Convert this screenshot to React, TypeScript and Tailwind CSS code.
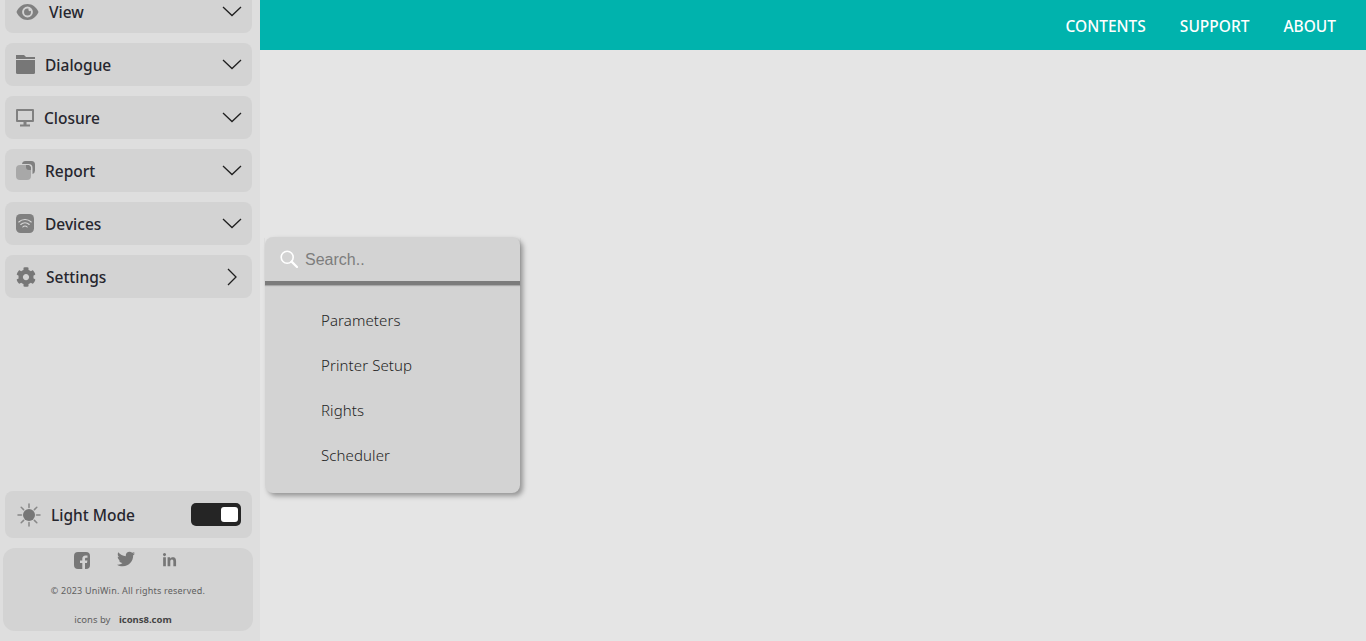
import { ReactNode } from 'react'
import { FaCog, FaTwitter, FaLinkedinIn } from 'react-icons/fa'

const uiFont = "font-['Noto_Sans','Open_Sans',sans-serif]"

function EyeIcon() {
  return (
    <svg width="23" height="18" viewBox="0 0 23 18" fill="#808080">
      <path fillRule="evenodd" d="M11.5 1C6.5 1 2.4 4.4.5 9c1.900 4.600 6 8 11 8s9.100-3.400 11-8c-1.900-4.600-6-8-11-8Zm0 2.600a5.400 5.400 0 1 1 0 10.800 5.400 5.400 0 0 1 0-10.800Z" />
      <path fillRule="evenodd" d="M11.500 5.500a3.500 3.500 0 1 0 3.500 3.500c0-.5-.1-.9-.3-1.300a1.300 1.300 0 1 1-1.900-1.900 3.500 3.500 0 0 0-1.300-.3Z" />
    </svg>
  )
}

function FolderIcon() {
  return (
    <svg width="19" height="19" viewBox="0 0 19 19" fill="#777777">
      <path d="M0 0h8l2 2h9v2H0Z" />
      <path d="M0 5h19v12.500a1.500 1.500 0 0 1-1.500 1.500h-16A1.500 1.500 0 0 1 0 17.500Z" />
    </svg>
  )
}

function MonitorIcon() {
  return (
    <svg width="18" height="18" viewBox="0 0 18 18" fill="#808080">
      <path fillRule="evenodd" d="M1 0h16a1 1 0 0 1 1 1v11a1 1 0 0 1-1 1H1a1 1 0 0 1-1-1V1a1 1 0 0 1 1-1Zm1 2v9h14V2Z" />
      <path d="M7.500 13h3v2.500h-3ZM4 15.500h10V17.500H4Z" />
    </svg>
  )
}

function ReportIcon() {
  return (
    <svg width="19" height="19" viewBox="0 0 19 19">
      <path d="M6 3.500A3.500 3.500 0 0 1 9.500 0h6A3.500 3.500 0 0 1 19 3.500v6a3.500 3.500 0 0 1-2.500 3.400V7a4 4 0 0 0-4-4H6Z" fill="#808080" />
      <rect x="0" y="4" width="15" height="15" rx="4" fill="#a8a8a8" />
      <path d="M10 4h3l2 2v3h-2a3 3 0 0 1-3-3Z" fill="#808080" />
    </svg>
  )
}

function WifiIcon() {
  return (
    <svg width="18" height="19" viewBox="0 0 18 19">
      <rect width="18" height="19" rx="4.500" fill="#808080" />
      <g fill="none" stroke="#d8d8d8" strokeWidth="1.100" strokeLinecap="round">
        <path d="M2.800 8a9 9 0 0 1 12.400 0" />
        <path d="M4.800 10.500a6 6 0 0 1 8.400 0" />
        <path d="M6.800 13a3 3 0 0 1 4.400 0" />
      </g>
    </svg>
  )
}

function SunIcon() {
  return (
    <svg width="24" height="24" viewBox="0 0 24 24">
      <circle cx="12" cy="12" r="6" fill="#777777" />
      <g stroke="#888888" strokeWidth="1.500" strokeLinecap="round">
        <path d="M12 1v3.500M12 19.500V23M1 12h3.500M19.500 12H23M4.200 4.200l2.400 2.400M17.400 17.400l2.400 2.400M4.200 19.800l2.400-2.400M17.400 6.600l2.400-2.400" />
      </g>
    </svg>
  )
}

function SearchIcon() {
  return (
    <svg width="18" height="18" viewBox="0 0 18 18" fill="none" stroke="#ffffff" strokeWidth="1.600" strokeLinecap="round">
      <circle cx="7.200" cy="7.200" r="6" />
      <path d="M11.600 11.600 17 17" strokeWidth="2.200" />
    </svg>
  )
}

function FacebookIcon() {
  return (
    <svg width="16" height="17" viewBox="0 0 16 17" fill="#777777">
      <path d="M4 0h8a4 4 0 0 1 4 4v9a4 4 0 0 1-4 4h-1v-6h2l.4-2.500H11V7c0-.8.4-1.300 1.300-1.300h1.200V3.500h-1.900C9.400 3.500 8.300 4.900 8.300 6.800v1.700H6V11h2.300v6H4a4 4 0 0 1-4-4V4a4 4 0 0 1 4-4Z" />
    </svg>
  )
}

function Chevron({ open }: { open: boolean }) {
  if (open) {
    return (
      <svg width="20" height="11" viewBox="0 0 20 11" fill="none" stroke="#202020" strokeWidth="1.300" className="mr-[10px]">
        <path d="M1 1l9 8.500L19 1" />
      </svg>
    )
  }
  return (
    <svg width="10" height="18" viewBox="0 0 10 18" fill="none" stroke="#202020" strokeWidth="1.300" className="mr-[15px]">
      <path d="M1 1l8 8-8 8" />
    </svg>
  )
}

function MenuItem({ icon, label, gap, open = true, first = false }: { icon: ReactNode; label: string; gap: string; open?: boolean; first?: boolean }) {
  return (
    <div className={`flex h-[43px] items-center justify-between rounded-lg bg-[#d3d3d3] pl-[11px] ${first ? '-mt-[10px]' : ''}`}>
      <div className={`flex items-center ${gap}`}>
        <span className="flex w-fit items-center">{icon}</span>
        <span className="pt-[2px] text-[15.500px] font-medium leading-none text-[#26262e]">{label}</span>
      </div>
      <Chevron open={open} />
    </div>
  )
}

const popupItems = ['Parameters', 'Printer Setup', 'Rights', 'Scheduler']

export default function App() {
  return (
    <div className={`flex h-[641px] w-[1366px] overflow-hidden bg-[#e5e5e5] ${uiFont}`}>
      <aside className="flex w-[260px] shrink-0 flex-col bg-[#dedede] pb-[10px]">
        <nav className="flex flex-col gap-[10px] pl-[5px] pr-[8px]">
          <MenuItem first icon={<EyeIcon />} label="View" gap="gap-[10px]" />
          <MenuItem icon={<FolderIcon />} label="Dialogue" gap="gap-[10px]" />
          <MenuItem icon={<MonitorIcon />} label="Closure" gap="gap-[10px]" />
          <MenuItem icon={<ReportIcon />} label="Report" gap="gap-[10px]" />
          <MenuItem icon={<WifiIcon />} label="Devices" gap="gap-[11px]" />
          <MenuItem icon={<FaCog size={20} color="#777777" />} label="Settings" gap="gap-[10px]" open={false} />
        </nav>

        <div className="mt-auto pl-[5px] pr-[8px]">
          <div className="flex h-[47px] items-center justify-between rounded-lg bg-[#d3d3d3] pl-[12px] pr-[11px]">
            <div className="flex items-center gap-[10px]">
              <SunIcon />
              <span className="pt-[2px] text-[15.500px] font-medium leading-none text-[#26262e]">Light Mode</span>
            </div>
            <div className="flex h-[23px] w-[50px] items-center justify-end rounded-[5px] bg-[#252525] pr-[3px]">
              <div className="h-[15px] w-[17px] rounded-[3px] bg-white" />
            </div>
          </div>
        </div>

        <div className="mt-[10px] ml-[3px] mr-[7px] flex h-[83px] flex-col items-center rounded-xl bg-[#d3d3d3] pt-[3px]">
          <div className="flex h-[18px] items-center gap-[27px] pr-[6px] text-[#777777]">
            <FacebookIcon />
            <FaTwitter size={18} className="-mt-[2px]" />
            <FaLinkedinIn size={15} />
          </div>
          <p className="mt-[17px] text-[9px] leading-none tracking-[0.2px] text-[#606060]">© 2023 UniWin. All rights reserved.</p>
          <p className="mt-[20px] pr-[10px] text-[9.500px] leading-none text-[#606060]">
            icons by <span className="ml-[6px] font-bold text-[#444444]">icons8.com</span>
          </p>
        </div>
      </aside>

      <div className="relative flex-1">
        <header className="flex h-[50px] items-center justify-end gap-[34px] bg-[#00b3ad] pr-[30px] pt-[3px] text-[15.500px] font-medium text-white">
          <span>CONTENTS</span>
          <span>SUPPORT</span>
          <span>ABOUT</span>
        </header>

        <div className="absolute left-[5px] top-[237px] h-[256px] w-[255px] rounded-lg bg-[#d3d3d3] shadow-[3px_3px_5px_rgba(0,0,0,0.35)]">
          <div className="flex h-[48px] items-center gap-[7px] border-b-[4px] border-[#7c7c7c] pl-[15px] shadow-[0_1px_1px_rgba(0,0,0,0.2)]">
            <SearchIcon />
            <span className="pt-[2px] font-['Liberation_Sans',sans-serif] text-[16px] leading-none text-[#7d7d7d]">Search..</span>
          </div>
          <ul className="flex flex-col pl-[56px] pt-[12px]">
            {popupItems.map((item) => (
              <li key={item} className="flex h-[45px] items-center pt-[1px] text-[15px] font-light leading-none tracking-[0.1px] text-[#1f1f1f]">
                {item}
              </li>
            ))}
          </ul>
        </div>
      </div>
    </div>
  )
}
